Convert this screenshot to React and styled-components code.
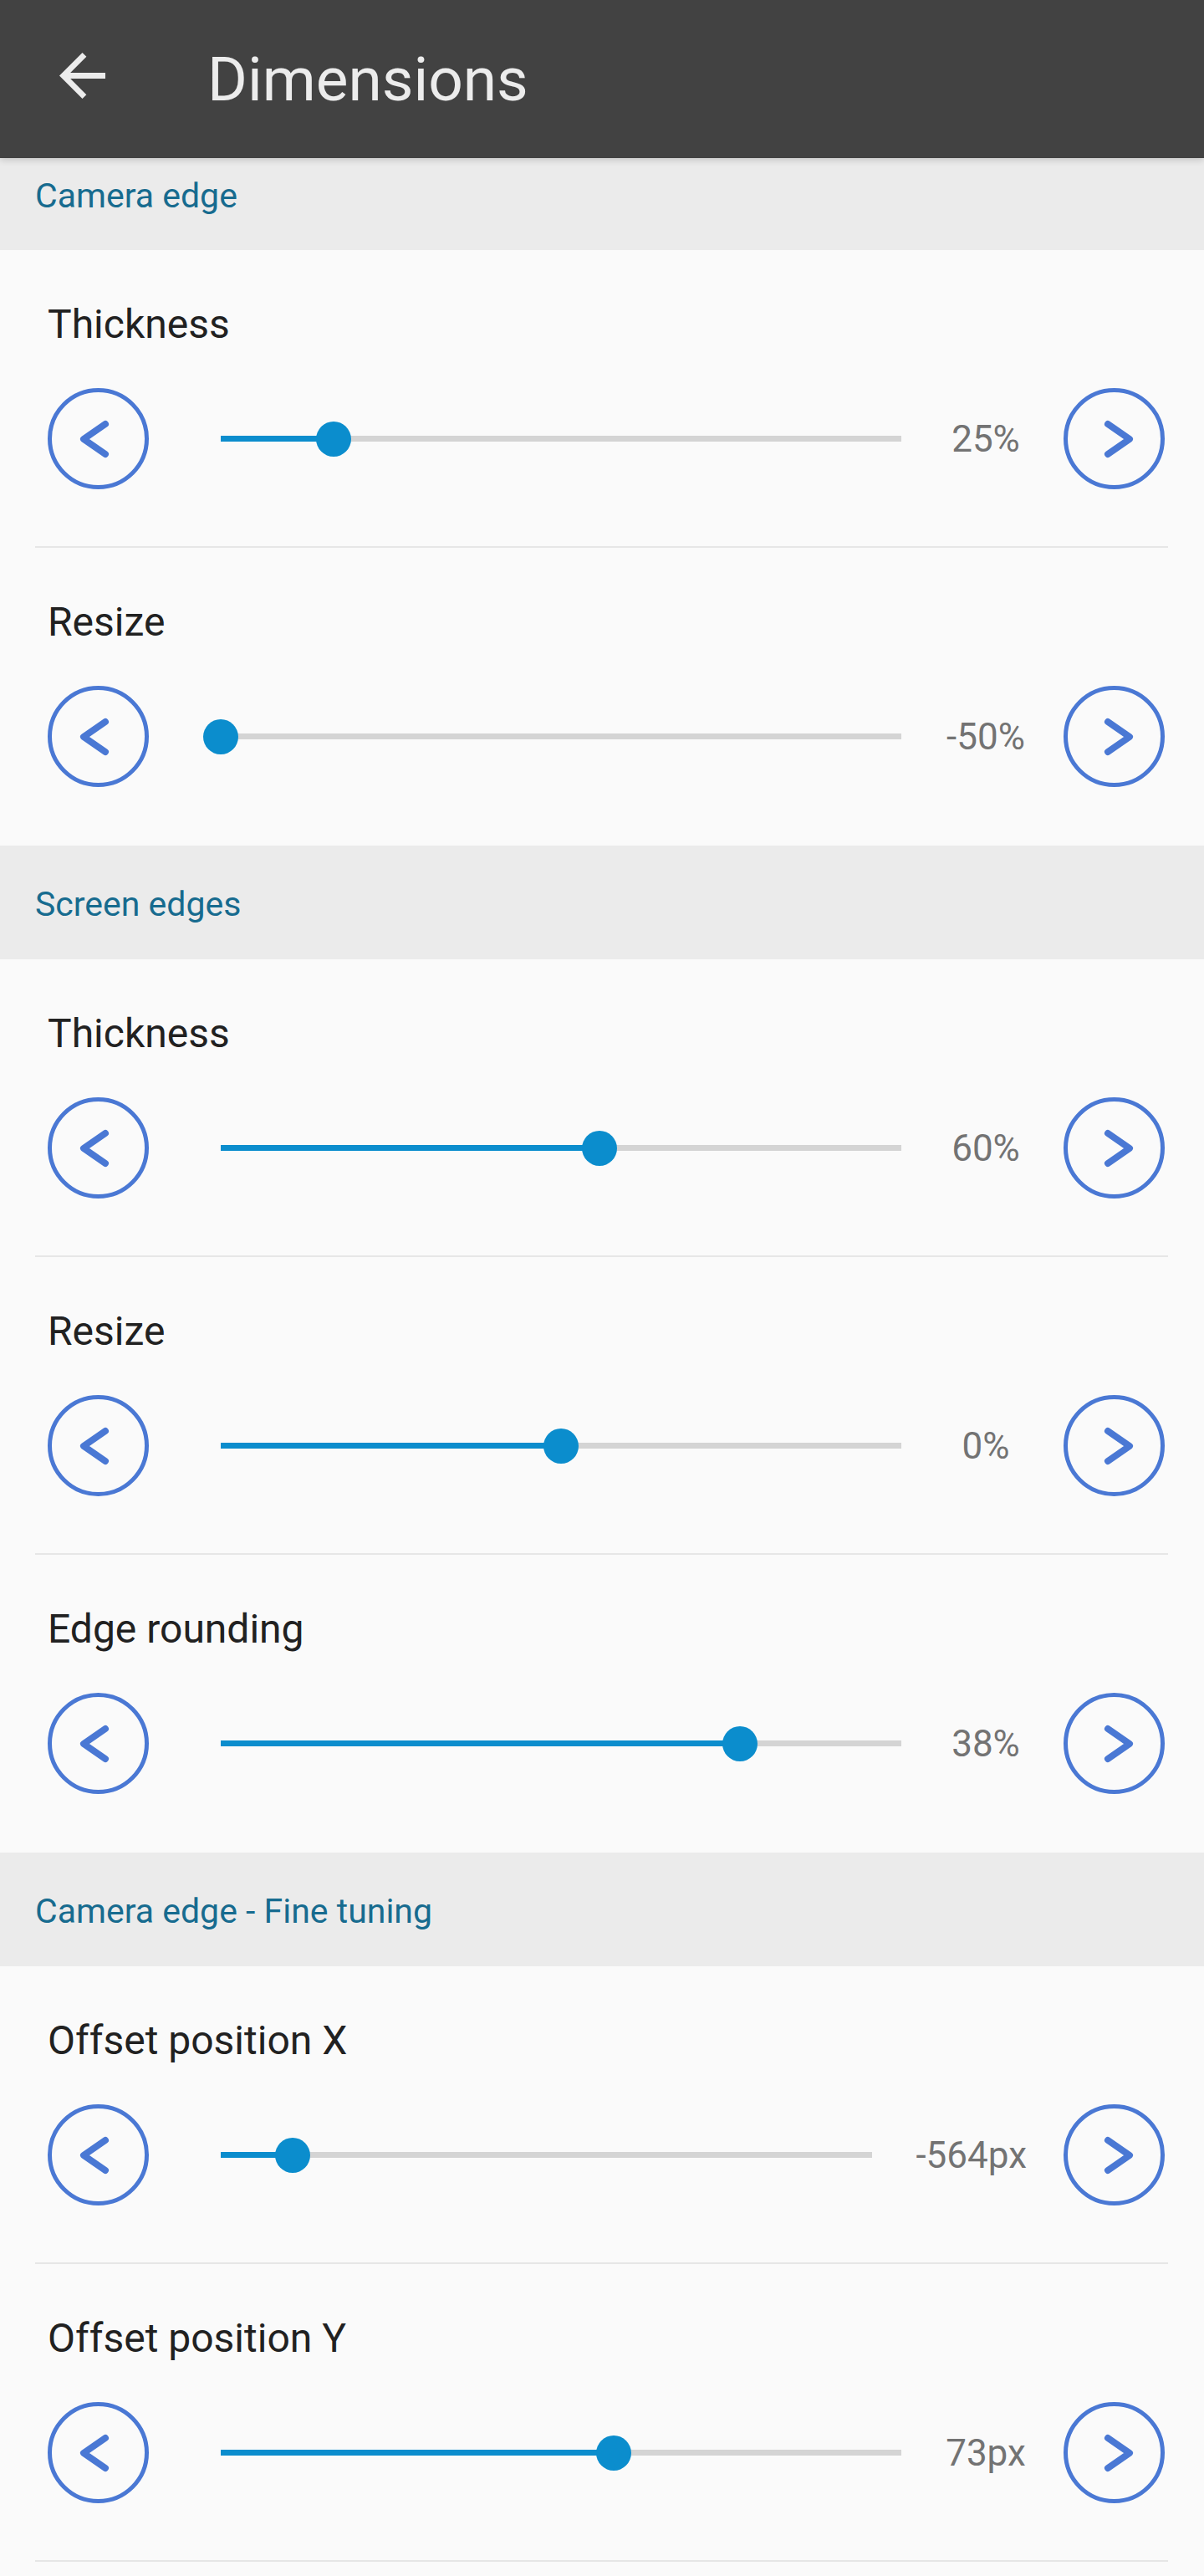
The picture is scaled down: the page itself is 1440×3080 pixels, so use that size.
import React from "react";
import styled, { createGlobalStyle } from "styled-components";

const GlobalStyle = createGlobalStyle`
  body {
    margin: 0;
    background: #fafafa;
    font-family: Roboto, "Noto Sans", sans-serif;
  }
`;

const sections = [
  {
    title: "Camera edge",
    clipped: true,
    items: [
      { label: "Thickness", value: "25%", pos: 0.166 },
      { label: "Resize", value: "-50%", pos: 0, last: true },
    ],
  },
  {
    title: "Screen edges",
    items: [
      { label: "Thickness", value: "60%", pos: 0.556 },
      { label: "Resize", value: "0%", pos: 0.5 },
      { label: "Edge rounding", value: "38%", pos: 0.763, last: true },
    ],
  },
  {
    title: "Camera edge - Fine tuning",
    items: [
      { label: "Offset position X", value: "-564px", pos: 0.11 },
      { label: "Offset position Y", value: "73px", pos: 0.577 },
    ],
  },
];

const Chevron = ({ dir }) => (
  <svg width="48" height="48" viewBox="0 0 48 48">
    <polyline
      points={dir === "left" ? "32,6 6,24 32,42" : "16,6 42,24 16,42"}
      fill="none"
      stroke="#4a78d4"
      strokeWidth="8"
      strokeLinecap="round"
      strokeLinejoin="round"
    />
  </svg>
);

const Slider = ({ pos }) => (
  <SliderBox>
    <Track>
      <Fill style={{ width: `${pos * 100}%` }} />
    </Track>
    <Thumb style={{ left: `${pos * 100}%` }} />
  </SliderBox>
);

export default function App() {
  return (
    <>
      <GlobalStyle />
      <Screen>
        <TopBar>
          <BackIcon viewBox="4 4 16 16">
            <path
              d="M20 11H7.83l5.59-5.59L12 4l-8 8 8 8 1.41-1.41L7.83 13H20v-2z"
              fill="#ececec"
            />
          </BackIcon>
          <Title>Dimensions</Title>
        </TopBar>

        {sections.map((s) => (
          <section key={s.title}>
            <SectionHead clipped={s.clipped}>{s.title}</SectionHead>
            {s.items.map((it) => (
              <Item key={it.label} last={it.last}>
                <Label>{it.label}</Label>
                <Controls>
                  <RoundButton>
                    <Chevron dir="left" />
                  </RoundButton>
                  <Slider pos={it.pos} />
                  <Value>{it.value}</Value>
                  <RoundButton>
                    <Chevron dir="right" />
                  </RoundButton>
                </Controls>
              </Item>
            ))}
          </section>
        ))}
      </Screen>
    </>
  );
}

const Screen = styled.div`
  width: 1440px;
  min-height: 3080px;
  background: #fafafa;
`;

const TopBar = styled.header`
  position: relative;
  z-index: 1;
  height: 189px;
  display: flex;
  align-items: center;
  background: #424242;
  box-shadow: 0 2px 8px rgba(0, 0, 0, 0.18);
`;

const BackIcon = styled.svg`
  width: 55px;
  height: 55px;
  margin-left: 71px;
  margin-bottom: 8px;
`;

const Title = styled.h1`
  margin: 0 0 0 122px;
  font-family: Roboto, sans-serif;
  font-weight: 400;
  font-size: 73px;
  line-height: 72px;
  color: #ececec;
`;

const SectionHead = styled.div`
  background: #ebebeb;
  color: #176b8f;
  font-size: 41px;
  line-height: 48px;
  padding: ${(p) => (p.clipped ? "21px 42px 41px" : "46px 42px 42px")};
`;

const Item = styled.div`
  height: 356px;
  box-sizing: border-box;
  padding: 61px 47px 0 57px;
  position: relative;

  &::after {
    content: "";
    display: ${(p) => (p.last ? "none" : "block")};
    position: absolute;
    left: 42px;
    right: 43px;
    bottom: 0;
    height: 2px;
    background: #e6e6e6;
  }
`;

const Label = styled.div`
  font-size: 48px;
  line-height: 56px;
  color: #212121;
`;

const Controls = styled.div`
  display: flex;
  align-items: center;
  margin-top: 48px;
`;

const RoundButton = styled.button`
  flex: none;
  width: 121px;
  height: 121px;
  box-sizing: border-box;
  border: 5px solid #4a78d4;
  border-radius: 50%;
  background: transparent;
  padding: 0;
  display: flex;
  align-items: center;
  justify-content: center;
`;

const SliderBox = styled.div`
  flex: 1;
  position: relative;
  height: 42px;
  margin-left: 86px;
  display: flex;
  align-items: center;
`;

const Track = styled.div`
  width: 100%;
  height: 7px;
  background: #d4d4d4;
`;

const Fill = styled.div`
  height: 100%;
  background: #0b8dcd;
`;

const Thumb = styled.div`
  position: absolute;
  top: 0;
  width: 42px;
  height: 42px;
  border-radius: 50%;
  background: #0b8dcd;
  transform: translateX(-50%);
`;

const Value = styled.div`
  min-width: 98px;
  margin: 0 44px 0 52px;
  text-align: center;
  font-size: 44px;
  color: #737373;
`;
